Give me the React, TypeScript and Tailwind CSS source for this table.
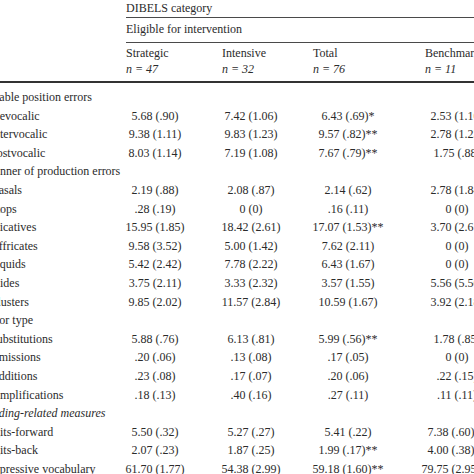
type Row = {
  label: string;
  kind: 'head' | 'item';
  italic?: boolean;
  shift?: string;
  values?: [string, string, string, string];
};

// the source image is cropped on the left; each label keeps its own hidden offset
const rows: Row[] = [
  { label: 'Syllable position errors', kind: 'head', shift: '-ml-[20px]' },
  { label: 'Prevocalic', kind: 'item', shift: '-ml-[11px]', values: ['5.68 (.90)', '7.42 (1.06)', '6.43 (.69)*', '2.53 (1.10)'] },
  { label: 'Intervocalic', kind: 'item', values: ['9.38 (1.11)', '9.83 (1.23)', '9.57 (.82)**', '2.78 (1.23)'] },
  { label: 'Postvocalic', kind: 'item', values: ['8.03 (1.14)', '7.19 (1.08)', '7.67 (.79)**', '1.75 (.88)'] },
  { label: 'Manner of production errors', kind: 'head' },
  { label: 'Nasals', kind: 'item', values: ['2.19 (.88)', '2.08 (.87)', '2.14 (.62)', '2.78 (1.84)'] },
  { label: 'Stops', kind: 'item', values: ['.28 (.19)', '0 (0)', '.16 (.11)', '0 (0)'] },
  { label: 'Fricatives', kind: 'item', shift: '-ml-[11px]', values: ['15.95 (1.85)', '18.42 (2.61)', '17.07 (1.53)**', '3.70 (2.61)'] },
  { label: 'Affricates', kind: 'item', values: ['9.58 (3.52)', '5.00 (1.42)', '7.62 (2.11)', '0 (0)'] },
  { label: 'Liquids', kind: 'item', shift: '-ml-[11px]', values: ['5.42 (2.42)', '7.78 (2.22)', '6.43 (1.67)', '0 (0)'] },
  { label: 'Glides', kind: 'item', shift: '-ml-[12px]', values: ['3.75 (2.11)', '3.33 (2.32)', '3.57 (1.55)', '5.56 (5.56)'] },
  { label: 'Clusters', kind: 'item', shift: '-ml-[10.5px]', values: ['9.85 (2.02)', '11.57 (2.84)', '10.59 (1.67)', '3.92 (2.18)'] },
  { label: 'Error type', kind: 'head' },
  { label: 'Substitutions', kind: 'item', values: ['5.88 (.76)', '6.13 (.81)', '5.99 (.56)**', '1.78 (.85)'] },
  { label: 'Omissions', kind: 'item', values: ['.20 (.06)', '.13 (.08)', '.17 (.05)', '0 (0)'] },
  { label: 'Additions', kind: 'item', values: ['.23 (.08)', '.17 (.07)', '.20 (.06)', '.22 (.15)'] },
  { label: 'Simplifications', kind: 'item', values: ['.18 (.13)', '.40 (.16)', '.27 (.11)', '.11 (.11)'] },
  { label: 'Reading-related measures', kind: 'head', italic: true, shift: '-ml-[20px]' },
  { label: 'Digits-forward', kind: 'item', shift: '-ml-[18px]', values: ['5.50 (.32)', '5.27 (.27)', '5.41 (.22)', '7.38 (.60)**'] },
  { label: 'Digits-back', kind: 'item', shift: '-ml-[18px]', values: ['2.07 (.23)', '1.87 (.25)', '1.99 (.17)**', '4.00 (.38)**'] },
  { label: 'Expressive vocabulary', kind: 'item', shift: '-ml-[13.5px]', values: ['61.70 (1.77)', '54.38 (2.99)', '59.18 (1.60)**', '79.75 (2.95)**'] },
];

const gridCols = 'grid grid-cols-[126px_96px_91px_112px_80px]';

function Value({ text, col }: { text: string; col: number }) {
  const widths = ['w-[58px]', 'w-[58px]', 'w-[70px]', 'w-[64px]'];
  return (
    <div className={`flex justify-center whitespace-nowrap ${widths[col]}`}>
      <span>{text}</span>
    </div>
  );
}

export default function App() {
  return (
    <div className="w-[474px] h-[474px] overflow-hidden bg-white text-[12px] text-[#2b2b2b] font-['Liberation_Serif',serif]">
      {/* Column header block */}
      <div className={gridCols}>
        <div />
        <div className="col-span-4 h-[18px] pt-[2px] leading-[12px] border-b border-[#4a4a4a] whitespace-nowrap">
          DIBELS category
        </div>
      </div>
      <div className={gridCols}>
        <div />
        <div className="col-span-4 h-[25px] pt-[5px] leading-[12px] border-b border-[#4a4a4a] whitespace-nowrap">
          Eligible for intervention
        </div>
      </div>
      <div className={`${gridCols} h-[40px] pt-[3px] leading-[15.5px] border-b-2 border-[#333]`}>
        <div />
        <div>
          <div>Strategic</div>
          <div className="italic">n = 47</div>
        </div>
        <div>
          <div>Intensive</div>
          <div className="italic">n = 32</div>
        </div>
        <div>
          <div>Total</div>
          <div className="italic">n = 76</div>
        </div>
        <div className="whitespace-nowrap">
          <div>Benchmark</div>
          <div className="italic">n = 11</div>
        </div>
      </div>

      {/* Body */}
      <div className="pt-[5px]">
        {rows.map((r) => {
          const shift = r.shift ?? (r.kind === 'head' ? '-ml-[16px]' : '-ml-[10px]');
          return (
            <div key={r.label} className={`${gridCols} h-[18.6px] leading-[18.6px]`}>
              <div className="overflow-hidden whitespace-nowrap">
                <span className={`block ${shift} ${r.italic ? 'italic' : ''}`}>{r.label}</span>
              </div>
              {r.values && r.values.map((v, i) => <Value key={i} text={v} col={i} />)}
            </div>
          );
        })}
      </div>
    </div>
  );
}
